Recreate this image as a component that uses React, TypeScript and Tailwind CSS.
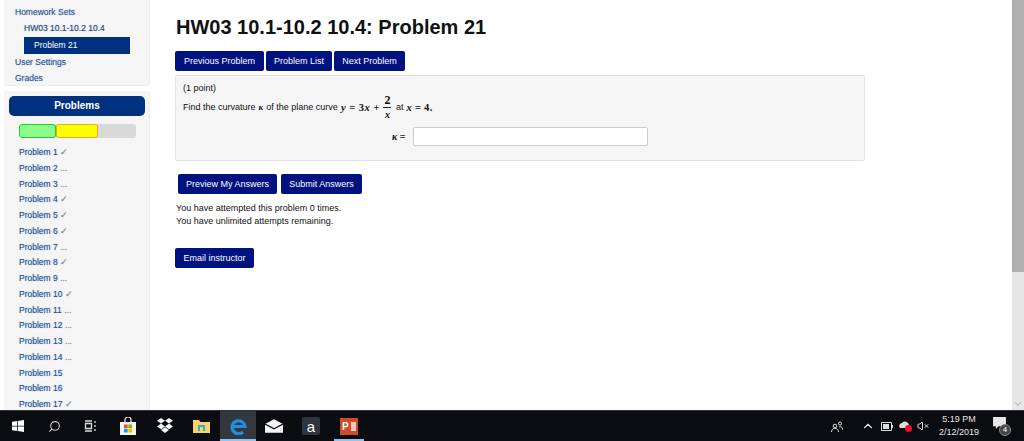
import { ChevronDown, ChevronUp, Search, VolumeX } from 'lucide-react'

const problems = [
  ['Problem 1', '✓'], ['Problem 2', '...'], ['Problem 3', '...'], ['Problem 4', '✓'], ['Problem 5', '✓'], ['Problem 6', '✓'],
  ['Problem 7', '...'], ['Problem 8', '✓'], ['Problem 9', '...'], ['Problem 10', '✓'], ['Problem 11', '...'], ['Problem 12', '...'],
  ['Problem 13', '...'], ['Problem 14', '...'], ['Problem 15', ''], ['Problem 16', ''], ['Problem 17', '✓'],
]

function NavButton({ label, width }: { label: string; width: string }) {
  return (
    <button className={`h-[20px] ${width} shrink-0 rounded-[2px] bg-[#00127f] text-center text-[9px] leading-[20px] text-white`}>
      {label}
    </button>
  )
}

function Taskbar() {
  return (
    <div className="flex h-[31px] shrink-0 items-center border-t border-[#333] bg-[#0b0c10] text-white">
      <div className="flex w-[36px] justify-center">
        <svg width="12" height="12" viewBox="0 0 13 13" fill="#fff">
          <path d="M0 2l5.5-.8v5H0zM6.300 1.100L13 0v6.200H6.300zM0 7h5.500v5L0 11.200zM6.300 7H13v6l-6.700-1z" />
        </svg>
      </div>
      <div className="flex w-[36px] justify-center"><Search size={13} className="-scale-x-100 text-[#ccc]" /></div>
      <div className="flex w-[36px] justify-center">
        <svg width="13" height="12" viewBox="0 0 13 12" fill="none" stroke="#ddd" strokeWidth="1.300">
          <path d="M1 1h7M1 11h7M1.500 3.500h6v5h-6zM11 1v2M11 5v2M11 9v2" />
        </svg>
      </div>
      <div className="flex w-[40px] justify-center">
        <svg width="18" height="18" viewBox="0 0 18 18">
          <path d="M1 5h16v13H1z" fill="#f3f3f3" />
          <path d="M6 5V3a3 3 0 0 1 6 0v2" fill="none" stroke="#f3f3f3" strokeWidth="1.200" />
          <path d="M5 7.500h3.700v3.700H5z" fill="#f25022" /><path d="M9.300 7.500H13v3.700H9.300z" fill="#7fba00" />
          <path d="M5 11.800h3.700v3.700H5z" fill="#00a4ef" /><path d="M9.300 11.800H13v3.700H9.300z" fill="#ffb900" />
        </svg>
      </div>
      <div className="flex w-[34px] justify-center">
        <svg width="18" height="17" viewBox="0 0 18 17" fill="#f2f2f2">
          <path d="M5 0l4 2.800L5 5.600 1 2.800zM13 0l4 2.800-4 2.800-4-2.800zM5 5.600l4 2.800-4 2.800-4-2.800zM13 5.600l4 2.800-4 2.800-4-2.800zM5 12l4-2.700 4 2.700-4 3z" />
        </svg>
      </div>
      <div className="flex w-[38px] justify-center">
        <svg width="17" height="14" viewBox="0 0 17 14">
          <path d="M0 1h6l1.500 2H17v11H0z" fill="#f6d36b" />
          <path d="M5 6h7v6H5z" fill="#3aa8de" />
          <path d="M7 8h3v6H7z" fill="#f6d36b" />
        </svg>
      </div>
      <div className="relative flex h-full w-[36px] items-center justify-center bg-[#34383d]">
        <svg width="17" height="17" viewBox="0 0 17 17" fill="none" stroke="#1a8fe3" strokeWidth="3.200">
          <path d="M2 8.500h13a6.500 6.500 0 1 0-2 5.500" />
        </svg>
        <div className="absolute right-0 bottom-0 left-0 h-[2px] bg-[#8fc4f0]" />
      </div>
      <div className="flex w-[36px] justify-center">
        <svg width="18" height="14" viewBox="0 0 19 14">
          <path d="M0 5L9.500 0 19 5v9H0z" fill="#f4f4f4" />
          <path d="M0 5l9.500 5L19 5" fill="none" stroke="#0b0c10" strokeWidth="1.400" />
        </svg>
      </div>
      <div className="flex w-[38px] justify-center">
        <div className="flex h-[18px] w-[18px] items-center justify-center rounded-[2px] bg-[#2f3540] font-['Liberation_Sans',sans-serif] text-[15px] leading-none text-white">a</div>
      </div>
      <div className="flex h-full w-[38px] justify-center">
        <div className="relative flex h-full w-[30px] items-center justify-center">
          <div className="flex h-[17px] w-[18px] items-center justify-start bg-[#d04a2b] pl-[2px] font-['Liberation_Sans',sans-serif] text-[10px] font-bold text-white">
            P<span className="ml-[2px] h-[9px] w-[5px] bg-[#f2c9bd]" />
          </div>
          <div className="absolute right-0 bottom-0 left-0 h-[2px] bg-[#8fc4f0]" />
        </div>
      </div>
      <div className="ml-auto flex items-center text-[#ddd]">
        <svg width="12" height="11" viewBox="0 0 12 11" fill="none" stroke="#ddd" className="mr-[18px]">
          <circle cx="4" cy="5" r="1.800" /><path d="M.5 11c0-5 7-5 7 0" />
          <circle cx="9" cy="2.500" r="1.500" /><path d="M8 6c2-1 3.500.5 3.500 2.500" />
        </svg>
        <ChevronUp size={14} className="mr-[6px]" />
        <svg width="12" height="9" viewBox="0 0 12 9" className="mr-[6px]">
          <path d="M.5.500h10v8H.5z" fill="none" stroke="#ddd" />
          <path d="M2 2h6v5H2z" fill="#ddd" /><path d="M11 3h1v3h-1z" fill="#ddd" />
        </svg>
        <svg width="13" height="12" viewBox="0 0 13 12" className="mr-[5px]">
          <path d="M1 8a3 3 0 0 1 2-5 4 4 0 0 1 7 2v3z" fill="#ddd" />
          <circle cx="9.500" cy="8.500" r="3.500" fill="#e81123" />
        </svg>
        <VolumeX size={12} className="mr-[7px]" />
        <div className="mr-[11px] w-[46px] text-center font-['Liberation_Sans',sans-serif] text-[9px] leading-[13px] text-[#e6e6e6]">
          <div>5:19 PM</div>
          <div>2/12/2019</div>
        </div>
        <div className="relative mr-[13px] h-[20px] w-[18px]">
          <svg width="13" height="12" viewBox="0 0 14 13" fill="#e6e6e6" className="absolute top-[1px] left-0">
            <path d="M0 0h14v10H6l-3 3v-3H0z" />
          </svg>
          <div className="absolute right-0 bottom-0 flex h-[12px] w-[12px] items-center justify-center rounded-full border border-[#888] bg-[#444] font-['Liberation_Sans',sans-serif] text-[8px] text-white">4</div>
        </div>
      </div>
    </div>
  )
}

export default function App() {
  return (
    <div className="flex h-[441px] w-[1024px] flex-col overflow-hidden bg-white font-['Liberation_Sans',sans-serif]">
      <div className="flex min-h-0 flex-1">
        <aside className="flex w-[150px] shrink-0 flex-col overflow-hidden pl-[4px] [text-shadow:0_0_1px_rgba(30,70,140,0.45)]">
          <div className="h-[86px] shrink-0 rounded-b-[3px] border-r border-b border-[#eeeeee] bg-[#f5f5f5] pt-[4px] pl-[11px] text-[8.500px] text-[#2a5599]">
            <div className="h-[16px] leading-[16px]">Homework Sets</div>
            <div className="h-[17px] pl-[9px] leading-[17px] text-[#27467c]">HW03 10.1-10.2 10.4</div>
            <div className="ml-[9px] h-[17px] w-[106px] bg-[#00317f] pl-[10px] leading-[17px] text-white">Problem 21</div>
            <div className="h-[16px] leading-[16px]">User Settings</div>
            <div className="h-[16px] leading-[16px]">Grades</div>
          </div>
          <div className="mt-[5px] flex-1 rounded-t-[3px] border-r border-[#eeeeee] bg-[#f5f5f5] pt-[5px] pl-[5px]">
            <div className="h-[20px] w-[136px] rounded-[5px] bg-[#00317f] text-center text-[10px] leading-[19px] font-bold text-white">Problems</div>
            <div className="mt-[8px] ml-[10px] flex h-[14px] w-[117px] overflow-hidden rounded-[3px] bg-[#d9d9d9]">
              <div className="w-[37px] rounded-[3px] border border-[#17d617] bg-[#8dfb8d]" />
              <div className="w-[42px] rounded-[3px] border border-[#f0a91c] bg-[#ffff00]" />
            </div>
            <div className="mt-[7px] ml-[10px] text-[8.500px] text-[#1d4f9a]">
              {problems.map(([name, mark]) => (
                <div key={name} className="h-[15.750px] leading-[15.750px]">
                  {name} <span className="text-[#7d8ba0]">{mark}</span>
                </div>
              ))}
            </div>
          </div>
        </aside>

        <main className="min-w-0 flex-1 pl-[25px]">
          <h1 className="mt-[14px] ml-[1px] h-[26px] text-[20px] leading-[26px] font-bold text-[#111]">HW03 10.1-10.2 10.4: Problem 21</h1>
          <div className="mt-[11px] flex gap-[2px]">
            <NavButton label="Previous Problem" width="w-[89px]" />
            <NavButton label="Problem List" width="w-[66px]" />
            <NavButton label="Next Problem" width="w-[71px]" />
          </div>
          <div className="mt-[4px] h-[86px] w-[690px] rounded-[2px] border border-[#e3e3e3] bg-[#f5f5f5] pt-[6px] pl-[7px] text-[9px] text-[#111]">
            <div className="h-[12px] leading-[12px]">(1 point)</div>
            <div className="mt-[1px] flex h-[26px] items-center">
              <span>Find the curvature</span>
              <span className="mx-[3px] font-['Liberation_Serif',serif] font-bold italic">κ</span>
              <span>of the plane curve</span>
              <span className="ml-[3px] font-['Liberation_Serif',serif] text-[10.500px] font-bold tracking-[0.5px]">
                <i>y</i> = 3<i>x</i> +
              </span>
              <span className="mr-[4px] ml-[3px] flex w-[9px] flex-col items-center font-['Liberation_Serif',serif] font-bold">
                <span className="-mt-[3px] text-[12px] leading-[14px]">2</span>
                <span className="w-[8px] border-t border-[#222]" />
                <i className="text-[10px] leading-[13px]">x</i>
              </span>
              <span>at</span>
              <span className="ml-[3px] font-['Liberation_Serif',serif] text-[10.500px] font-bold tracking-[0.3px]">
                <i>x</i> = 4.
              </span>
            </div>
            <div className="mt-[6px] flex items-center">
              <span className="ml-[209px] w-[21px] font-['Liberation_Serif',serif] text-[10px] font-bold">
                <i>κ</i> =
              </span>
              <input className="h-[19px] w-[235px] rounded-[2px] border border-[#cccccc] bg-white" />
            </div>
          </div>
          <div className="mt-[13px] ml-[3px] flex gap-[4px]">
            <NavButton label="Preview My Answers" width="w-[99px]" />
            <NavButton label="Submit Answers" width="w-[81px]" />
          </div>
          <div className="mt-[8px] ml-[1px] text-[9px] leading-[12.500px] text-[#111]">
            <div>You have attempted this problem 0 times.</div>
            <div>You have unlimited attempts remaining.</div>
          </div>
          <div className="mt-[17px]">
            <NavButton label="Email instructor" width="w-[79px]" />
          </div>
        </main>

        <div className="flex w-[12px] shrink-0 flex-col bg-[#e6e6e6]">
          <div className="h-[272px] bg-[#b0b0b0]" />
          <div className="mt-auto flex h-[13px] items-center justify-center">
            <ChevronDown size={10} className="text-[#a0a0a0]" />
          </div>
        </div>
      </div>
      <Taskbar />
    </div>
  )
}
